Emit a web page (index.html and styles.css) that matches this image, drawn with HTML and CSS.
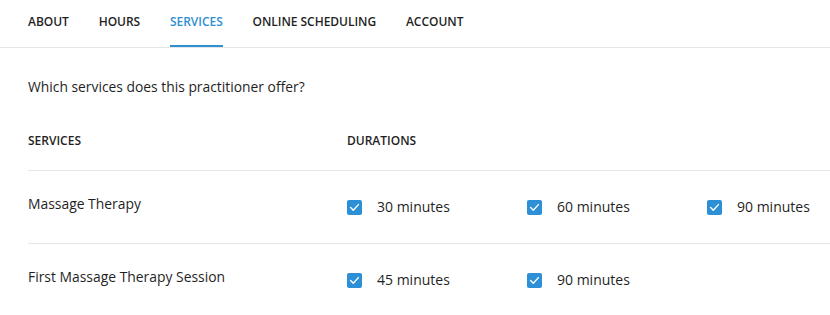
FILE: index.html
```html
<!DOCTYPE html>
<html lang="en">
<head>
<meta charset="utf-8">
<title>Practitioner services</title>
<link rel="stylesheet" href="styles.css">
</head>
<body>
<nav class="tabs">
  <a class="tab">About</a>
  <a class="tab">Hours</a>
  <a class="tab tab-active">Services</a>
  <a class="tab">Online Scheduling</a>
  <a class="tab">Account</a>
</nav>
<main class="content">
  <p class="question">Which services does this practitioner offer?</p>
  <div class="table">
    <div class="row head">
      <div class="col-name">Services</div>
      <div class="col-durations">Durations</div>
    </div>
    <div class="row">
      <div class="col-name name">Massage Therapy</div>
      <div class="col-durations durations">
        <label class="dur"><span class="box"><svg viewBox="0 0 15 15" width="15" height="15"><path d="M3.6 7.6 L6.3 10.2 L11.4 4.6" fill="none" stroke="#fff" stroke-width="1.4" stroke-linecap="round" stroke-linejoin="round"/></svg></span><span>30 minutes</span></label>
        <label class="dur"><span class="box"><svg viewBox="0 0 15 15" width="15" height="15"><path d="M3.6 7.6 L6.3 10.2 L11.4 4.6" fill="none" stroke="#fff" stroke-width="1.4" stroke-linecap="round" stroke-linejoin="round"/></svg></span><span>60 minutes</span></label>
        <label class="dur"><span class="box"><svg viewBox="0 0 15 15" width="15" height="15"><path d="M3.6 7.6 L6.3 10.2 L11.4 4.6" fill="none" stroke="#fff" stroke-width="1.4" stroke-linecap="round" stroke-linejoin="round"/></svg></span><span>90 minutes</span></label>
      </div>
    </div>
    <div class="row">
      <div class="col-name name">First Massage Therapy Session</div>
      <div class="col-durations durations">
        <label class="dur"><span class="box"><svg viewBox="0 0 15 15" width="15" height="15"><path d="M3.6 7.6 L6.3 10.2 L11.4 4.6" fill="none" stroke="#fff" stroke-width="1.4" stroke-linecap="round" stroke-linejoin="round"/></svg></span><span>45 minutes</span></label>
        <label class="dur"><span class="box"><svg viewBox="0 0 15 15" width="15" height="15"><path d="M3.6 7.6 L6.3 10.2 L11.4 4.6" fill="none" stroke="#fff" stroke-width="1.4" stroke-linecap="round" stroke-linejoin="round"/></svg></span><span>90 minutes</span></label>
      </div>
    </div>
  </div>
</main>
</body>
</html>
```
FILE: styles.css
```css
* { box-sizing: border-box; }
html, body { margin: 0; padding: 0; background: #fff; }
body {
  font-family: "Open Sans", "Noto Sans", "Liberation Sans", sans-serif;
  color: #1f1f1f;
  width: 830px;
  overflow: hidden;
}
.tabs {
  display: flex;
  gap: 29.8px;
  padding-left: 28px;
  height: 48px;
  border-bottom: 1px solid #e6e6e6;
}
.tab {
  display: block;
  height: 47px;
  padding-top: 14px;
  font-size: 12px;
  line-height: 16px;
  font-weight: 600;
  letter-spacing: -0.03px;
  text-transform: uppercase;
  color: #1f1f1f;
  border-bottom: 2px solid transparent;
  cursor: pointer;
}
.tab-active {
  color: #2f8fd3;
  border-bottom-color: #2f8fd3;
}
.content { padding-left: 28px; }
.question {
  margin: 29px 0 0;
  font-size: 13.85px;
  line-height: 20px;
}
.table { margin-top: 35px; }
.row {
  display: grid;
  grid-template-columns: 319px 1fr;
}
.row.head {
  height: 39px;
  padding-top: 1px;
  font-size: 12px;
  line-height: 16px;
  font-weight: 600;
  text-transform: uppercase;
  border-bottom: 1px solid #e6e6e6;
}
.row + .row:not(:last-child) { border-bottom: 1px solid #e6e6e6; }
.row:not(.head) { height: 73px; }
.row:last-child { height: 72px; }
.name {
  padding-top: 23px;
  font-size: 13.9px;
  line-height: 20px;
}
.durations {
  display: grid;
  grid-template-columns: 180px 180px 1fr;
  padding-top: 26px;
}
.dur {
  display: flex;
  align-items: center;
  gap: 15px;
  font-size: 14px;
  line-height: 20px;
  height: 20px;
  white-space: nowrap;
}
.box {
  width: 15px;
  height: 15px;
  border-radius: 2px;
  background: #2d8fd5;
  display: block;
  flex: none;
}
.box svg { display: block; }
```
